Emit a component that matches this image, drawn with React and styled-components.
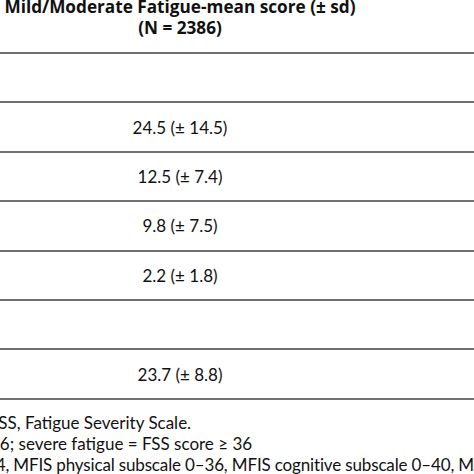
import React from 'react'
import styled, { createGlobalStyle } from 'styled-components'

const GlobalStyle = createGlobalStyle`
  html, body {
    margin: 0;
    padding: 0;
    background: #ffffff;
  }
  body {
    font-family: Lato, "Open Sans", "Liberation Sans", sans-serif;
    color: #1a1a1a;
  }
`

const Page = styled.div`
  width: 474px;
  height: 474px;
  overflow: hidden;
`

const Header = styled.div`
  width: 360px;
  height: 52px;
  text-align: center;
  font-family: "Open Sans", Lato, sans-serif;
  font-weight: 700;
  font-size: 17.2px;
  line-height: 21px;
  margin-top: -4px;
  padding-bottom: 4px;
  color: #111;
`

const Row = styled.div`
  border-top: 2px solid #707070;
  height: ${(p) => (p.$h === undefined ? 47.4 : p.$h)}px;
  display: flex;
  align-items: center;
`

const Cell = styled.div`
  width: 360px;
  text-align: center;
  font-size: 17px;
  color: #111;
`

const Notes = styled.div`
  padding-top: 12px;
  font-size: 17px;
  line-height: 21px;
  color: #111;
  white-space: nowrap;
`

const Note = styled.div`
  margin-left: ${(p) => p.$shift}px;
  letter-spacing: ${(p) => p.$track || 0}px;
`

const rows = [
  { value: '' },
  { value: '24.5 (± 14.5)' },
  { value: '12.5 (± 7.4)' },
  { value: '9.8 (± 7.5)' },
  { value: '2.2 (± 1.8)' },
  { value: '' },
  { value: '23.7 (± 8.8)' }
]

export default function App() {
  return (
    <Page>
      <GlobalStyle />
      <Header>
        Mild/Moderate Fatigue-mean score (± sd)
        <br />
        (N = 2386)
      </Header>
      {rows.map((r, i) => (
        <Row key={i}>
          <Cell>{r.value}</Cell>
        </Row>
      ))}
      <Row $h={0} />
      <Notes>
        <Note $shift={-11}>FSS, Fatigue Severity Scale.</Note>
        <Note $shift={-10}>36; severe fatigue = FSS score ≥ 36</Note>
        <Note $shift={-14} $track={-0.15}>84, MFIS physical subscale 0–36, MFIS cognitive subscale 0–40, MFIS psychosocial subscale 0–8</Note>
      </Notes>
    </Page>
  )
}
